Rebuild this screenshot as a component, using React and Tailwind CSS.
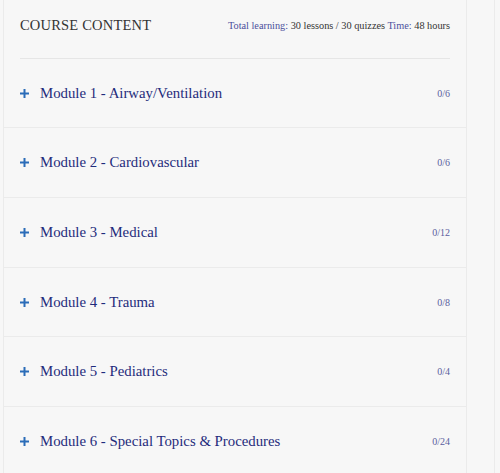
const modules = [
  { title: 'Module 1 - Airway/Ventilation', count: '0/6', h: 'h-[69px]' },
  { title: 'Module 2 - Cardiovascular', count: '0/6', h: 'h-[70px]' },
  { title: 'Module 3 - Medical', count: '0/12', h: 'h-[70px]' },
  { title: 'Module 4 - Trauma', count: '0/8', h: 'h-[69px]' },
  { title: 'Module 5 - Pediatrics', count: '0/4', h: 'h-[70px]' },
  { title: 'Module 6 - Special Topics & Procedures', count: '0/24', h: 'h-[70px]' },
];

function Plus() {
  return (
    <svg width="9" height="9" viewBox="0 0 9 9" className="shrink-0">
      <path d="M4.5 0v9M0 4.5h9" stroke="#2b6cb8" strokeWidth="2" />
    </svg>
  );
}

export default function App() {
  return (
    <div className="flex h-[473px] overflow-hidden bg-[#f7f7f7] font-['Liberation_Serif',serif]">
      <div className="ml-[3px] w-[464px] shrink-0 border-x border-[#ebebeb]">
        <div className="mx-4 flex h-[59px] items-center justify-between border-b border-[#e6e6e6] pb-[6px]">
          <h2 className="text-[14.5px] tracking-[0.2px] text-[#333]">COURSE CONTENT</h2>
          <p className="text-[10.3px] text-[#333]">
            <span className="text-[#4b4f9c]">Total learning:</span> 30 lessons / 30 quizzes{' '}
            <span className="text-[#4b4f9c]">Time:</span> 48 hours
          </p>
        </div>
        {modules.map((m) => (
          <div key={m.title} className={`flex ${m.h} items-center border-b border-[#ebebeb] px-4`}>
            <span className="flex w-[20px] items-center">
              <Plus />
            </span>
            <span className="flex-1 text-[14.8px] text-[#1f2c7c]">{m.title}</span>
            <span className="text-[10px] text-[#5a5e9e]">{m.count}</span>
          </div>
        ))}
      </div>
      <div className="ml-[27px] border-l border-[#ebebeb]" />
    </div>
  );
}
